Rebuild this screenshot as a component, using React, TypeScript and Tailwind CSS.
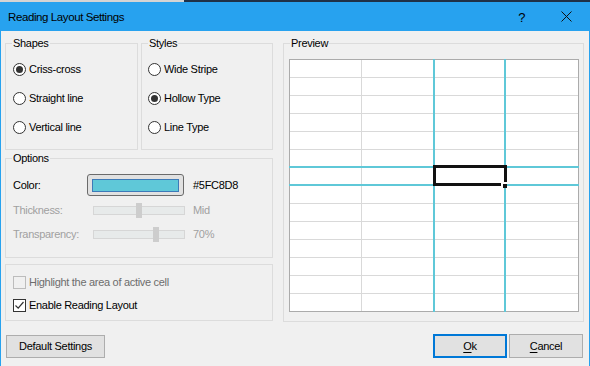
import React from 'react';

function Radio({ label, checked }: { label: string; checked?: boolean }) {
  return (
    <div className="flex items-center h-[16px]">
      <span className="w-[13px] h-[13px] rounded-full border border-[#333333] bg-white flex items-center justify-center">
        {checked && <span className="w-[7px] h-[7px] rounded-full bg-[#333333]" />}
      </span>
      <span className="ml-[3px]">{label}</span>
    </div>
  );
}

function Check({ label, checked, disabled }: { label: string; checked?: boolean; disabled?: boolean }) {
  return (
    <div className="flex items-center h-[16px]">
      <span
        className={
          disabled
            ? 'w-[13px] h-[13px] border border-[#bcbcbc] bg-[#f0f0f0]'
            : 'w-[13px] h-[13px] border border-[#333333] bg-white flex items-center justify-center'
        }
      >
        {checked && (
          <svg width="11" height="11" viewBox="0 0 11 11">
            <path d="M1.5 5.5 L4.2 8.2 L9.5 2" fill="none" stroke="#333333" strokeWidth="1.2" />
          </svg>
        )}
      </span>
      <span className={disabled ? 'ml-[3px] text-[#6d6d6d]' : 'ml-[3px]'}>{label}</span>
    </div>
  );
}

function Slider({ label, value, pos }: { label: string; value: string; pos: number }) {
  return (
    <div className="flex items-center h-[15px] text-[#a0a0a0]">
      <span className="w-[80px]">{label}</span>
      <div className="relative w-[92px] h-[9px] bg-[#e7eaea] border border-[#d6d6d6]">
        <span className="absolute top-[-4px] w-[6px] h-[15px] bg-[#cdcdcd]" style={{ left: pos }} />
      </div>
      <span className="ml-[8px]">{value}</span>
    </div>
  );
}

function PreviewGrid() {
  const rows = Array.from({ length: 13 }, (_, i) => (i + 1) * 18);
  return (
    <svg width="290" height="253" className="block">
      <rect x="0" y="0" width="290" height="253" fill="#ffffff" />
      {rows.map((y) => (
        <rect key={y} x="0" y={y} width="290" height="1" fill="#d9d9d9" />
      ))}
      <rect x="72" y="0" width="1" height="253" fill="#d9d9d9" />
      <rect x="0.5" y="0.5" width="289" height="252" fill="none" stroke="#ababab" />
      <rect x="144" y="0" width="2" height="253" fill="#5fc8d8" />
      <rect x="215" y="0" width="2" height="253" fill="#5fc8d8" />
      <rect x="0" y="107" width="290" height="2" fill="#5fc8d8" />
      <rect x="0" y="125" width="290" height="2" fill="#5fc8d8" />
      <rect x="145.5" y="107.5" width="71" height="18" fill="none" stroke="#111111" strokeWidth="3" />
      <rect x="212" y="123" width="6" height="6" fill="#ffffff" />
      <rect x="214" y="125" width="4" height="4" fill="#111111" />
    </svg>
  );
}

export default function App() {
  return (
    <div className="w-[590px] h-[366px] bg-[#f0f0f0] overflow-hidden font-['Liberation_Sans',Arial,sans-serif] text-[11px] tracking-[-0.3px] text-black leading-[13px]">
      {/* desktop strip behind the window */}
      <div className="flex h-[2px]">
        <div className="w-[184px] bg-[#d4d4d4]" />
        <div className="flex-1 bg-[#1f3148]" />
      </div>
      <div className="h-[364px] border-x border-[#27a2ef] flex flex-col">
        {/* title bar */}
        <div className="h-[29px] bg-[#27a2ef] flex items-center pl-[7px] text-[11.5px] tracking-[-0.4px]">
          <span className="pt-[1px]">Reading Layout Settings</span>
          <span className="ml-auto text-[13px] mr-[36px] pt-[1px]">?</span>
          <svg width="11" height="11" viewBox="0 0 11 11" className="mr-[17px]">
            <path d="M0.5 0.5 L10.5 10.5 M10.5 0.5 L0.5 10.5" stroke="#111111" strokeWidth="1" />
          </svg>
        </div>

        <div className="flex-1 pt-[6px] pl-[4px] pr-[5px]">
          <div className="flex">
            {/* left column */}
            <div className="w-[268px] flex flex-col">
              <div className="flex gap-[3px]">
                <fieldset className="w-[133px] h-[113px] border border-[#dcdcdc]">
                  <legend className="ml-[6px] px-[1px] leading-[13px]">Shapes</legend>
                  <div className="flex flex-col gap-[13px] pt-[11px] pl-[7px]">
                    <Radio label="Criss-cross" checked />
                    <Radio label="Straight line" />
                    <Radio label="Vertical line" />
                  </div>
                </fieldset>
                <fieldset className="w-[132px] h-[113px] border border-[#dcdcdc]">
                  <legend className="ml-[6px] px-[1px] leading-[13px]">Styles</legend>
                  <div className="flex flex-col gap-[13px] pt-[11px] pl-[6px]">
                    <Radio label="Wide Stripe" />
                    <Radio label="Hollow Type" checked />
                    <Radio label="Line Type" />
                  </div>
                </fieldset>
              </div>

              <fieldset className="mt-[2px] h-[106px] border border-[#dcdcdc]">
                <legend className="ml-[6px] px-[1px] leading-[13px]">Options</legend>
                <div className="pl-[7px] pt-[9px] flex flex-col">
                  <div className="flex items-center h-[22px]">
                    <span className="w-[74px]">Color:</span>
                    <div className="w-[97px] h-[22px] rounded-[3px] border border-[#6b6b6b] bg-[#e1e1e1] p-[4px] pb-[3px]">
                      <div className="h-full border border-[#3d7ab8] bg-[#5fc8d8]" />
                    </div>
                    <span className="ml-[9px]">#5FC8D8</span>
                  </div>
                  <div className="mt-[7px]">
                    <Slider label="Thickness:" value="Mid" pos={42} />
                  </div>
                  <div className="mt-[9px]">
                    <Slider label="Transparency:" value="70%" pos={59} />
                  </div>
                </div>
              </fieldset>

              <div className="mt-[6px] h-[57px] border border-[#dcdcdc] pl-[7px] pt-[9px] flex flex-col gap-[7px]">
                <Check label="Highlight the area of active cell" disabled />
                <Check label="Enable Reading Layout" checked />
              </div>
            </div>

            {/* preview */}
            <fieldset className="ml-[10px] w-[301px] h-[285px] border border-[#dcdcdc]">
              <legend className="ml-[6px] px-[1px] leading-[13px]">Preview</legend>
              <div className="pl-[5px] pt-[9px]">
                <PreviewGrid />
              </div>
            </fieldset>
          </div>

          {/* buttons */}
          <div className="mt-[12px] flex items-center">
            <button className="ml-[1px] w-[99px] h-[23px] bg-[#e1e1e1] border border-[#adadad] text-center">
              Default Settings
            </button>
            <div className="ml-auto flex gap-[2px] mr-[1px]">
              <button className="w-[74px] h-[24px] bg-[#e1e1e1] border-2 border-[#0078d7] text-center">
                <span className="underline underline-offset-2">O</span>k
              </button>
              <button className="w-[74px] h-[24px] bg-[#e1e1e1] border border-[#adadad] text-center">
                <span className="underline underline-offset-2">C</span>ancel
              </button>
            </div>
          </div>
        </div>
      </div>
    </div>
  );
}
